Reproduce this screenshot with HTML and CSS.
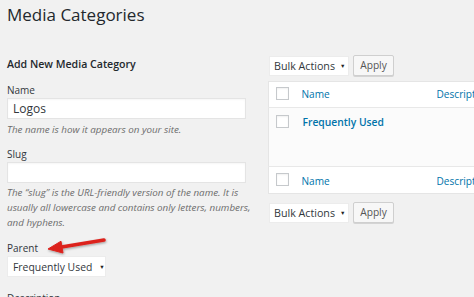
FILE: index.html
```html
<!DOCTYPE html>
<html lang="en">
<head>
  <meta charset="UTF-8">
  <title>Media Categories</title>
  <link rel="stylesheet" href="styles.css">
</head>
<body>
  <div class="wrap">
    <h1 class="page-title">Media Categories</h1>

    <div class="columns">
      <div class="col-left">
        <h2 class="form-title">Add New Media Category</h2>

        <div class="form-field name-field">
          <label class="field-label">Name</label>
          <input class="text-input" type="text" value="Logos">
          <p class="help">The name is how it appears on your site.</p>
        </div>

        <div class="form-field slug-field">
          <label class="field-label">Slug</label>
          <input class="text-input" type="text" value="">
          <p class="help">The “slug” is the URL-friendly version of the name. It is usually all lowercase and contains only letters, numbers, and hyphens.</p>
        </div>

        <div class="form-field parent-field">
          <label class="field-label">Parent</label>
          <div class="select select-parent">Frequently Used <span class="caret">▼</span></div>
          <!-- red callout arrow pointing at the Parent label -->
          <svg class="callout" viewBox="0 0 66 26" xmlns="http://www.w3.org/2000/svg">
            <defs>
              <filter id="shadow" x="-20%" y="-50%" width="140%" height="200%">
                <feDropShadow dx="0.6" dy="1.2" stdDeviation="0.9" flood-color="#000" flood-opacity="0.35"/>
              </filter>
            </defs>
            <g filter="url(#shadow)">
              <path d="M61 7 L17 14.3" stroke="#dc231d" stroke-width="3.6" stroke-linecap="round" fill="none"/>
              <path d="M5 16 L18 8.2 L20 20 Z" fill="#dc231d" stroke="#dc231d" stroke-width="1" stroke-linejoin="round"/>
            </g>
          </svg>
        </div>

        <div class="form-field desc-field">
          <label class="field-label">Description</label>
        </div>
      </div>

      <div class="col-right">
        <div class="tablenav">
          <div class="select select-bulk">Bulk Actions <span class="caret">▼</span></div>
          <button class="button">Apply</button>
        </div>

        <table class="list-table">
          <thead>
            <tr>
              <td class="check-col"><span class="checkbox"></span></td>
              <th class="name-col">Name</th>
              <th class="desc-col">Description</th>
            </tr>
          </thead>
          <tbody>
            <tr class="item-row">
              <td class="check-col"><span class="checkbox"></span></td>
              <td class="name-col"><a class="row-title" href="#">Frequently Used</a></td>
              <td class="desc-col"></td>
            </tr>
          </tbody>
          <tfoot>
            <tr>
              <td class="check-col"><span class="checkbox"></span></td>
              <th class="name-col">Name</th>
              <th class="desc-col">Description</th>
            </tr>
          </tfoot>
        </table>

        <div class="tablenav">
          <div class="select select-bulk">Bulk Actions <span class="caret">▼</span></div>
          <button class="button">Apply</button>
        </div>
      </div>
    </div>
  </div>
</body>
</html>
```

FILE: styles.css
```css
* {
  margin: 0;
  padding: 0;
  box-sizing: border-box;
}

body {
  background-color: #f1f1f1;
  color: #444;
  font-family: "Open Sans", "Noto Sans", sans-serif;
  font-size: 10px;
  width: 474px;
  height: 297px;
  overflow: hidden;
}

.wrap {
  padding-left: 7px;
}

.page-title {
  font-size: 17px;
  font-weight: 400;
  color: #23282d;
  line-height: 30px;
}

.columns {
  display: flex;
  gap: 22px;
}

.col-left {
  width: 239px;
  flex-shrink: 0;
}

.col-right {
  flex: 1;
  min-width: 0;
  overflow: hidden;
  padding-top: 25px;
}

/* left: add form */

.form-title {
  font-size: 10.6px;
  font-weight: 600;
  color: #23282d;
  line-height: 14px;
  margin-top: 27px;
}

.form-field {
  position: relative;
}

.name-field {
  margin-top: 12px;
}

.slug-field {
  margin-top: 10px;
}

.parent-field {
  margin-top: 11px;
}

.desc-field {
  margin-top: 14px;
}

.field-label {
  display: block;
  color: #32373c;
  font-size: 10px;
  line-height: 14px;
  margin-bottom: 1px;
}

.text-input {
  display: block;
  width: 100%;
  height: 21px;
  border: 1px solid #e4e4e4;
  background: #fff;
  font: inherit;
  font-size: 12px;
  color: #32373c;
  padding: 0 5px;
  box-shadow: inset 0 1px 2px rgba(0, 0, 0, 0.04);
  outline: none;
}

.help {
  font-style: italic;
  font-size: 9.8px;
  color: #6c6c6c;
  line-height: 15px;
  margin-top: 3px;
}

.slug-field .help {
  margin-top: 2px;
  width: 244px;
}

.select {
  display: inline-flex;
  align-items: center;
  background: #fff;
  border: 1px solid #ececec;
  color: #32373c;
  white-space: nowrap;
}

.select .caret {
  font-size: 5.5px;
  margin-left: 5px;
  color: #222;
}

.select-parent {
  height: 21px;
  width: 99px;
  padding: 0 4px 0 5px;
  font-size: 10.4px;
}

.select-parent .caret {
  margin-left: 7px;
}

.callout {
  position: absolute;
  left: 36px;
  top: -8px;
  width: 66px;
  height: 26px;
}

/* right: category list */

.tablenav {
  display: flex;
  gap: 4px;
  align-items: flex-start;
  height: 22px;
}

.select-bulk {
  height: 20px;
  width: 80px;
  margin: 1px 0 0 1px;
  padding: 0 5px 0 4px;
  font-size: 10.7px;
}

.button {
  font: inherit;
  font-size: 10.2px;
  color: #555;
  background: #f7f7f7;
  border: 1px solid #cfcfcf;
  border-radius: 2px;
  box-shadow: 0 1px 0 #d4d4d4;
  height: 21px;
  width: 41px;
  line-height: 19px;
  text-align: center;
}

.list-table {
  width: 240px;
  border-collapse: collapse;
  background: #fff;
  border: 1px solid #e5e5e5;
  border-right: 0;
  margin: 4px 0 8px;
  table-layout: fixed;
}

.list-table th,
.list-table td {
  text-align: left;
  font-weight: 400;
  vertical-align: top;
  white-space: nowrap;
  overflow: hidden;
  line-height: 14px;
}

.list-table thead tr {
  height: 26px;
  border-bottom: 1px solid #e8e8e8;
}

.list-table tfoot tr {
  height: 27px;
  border-top: 1px solid #e8e8e8;
}

.check-col {
  width: 33px;
  padding: 5px 0 0 7px;
}

.name-col {
  width: 135px;
  color: #0073aa;
  font-size: 10.1px;
  padding-top: 5px;
}

.desc-col {
  color: #0073aa;
  font-size: 10.1px;
  padding-top: 5px;
}

.list-table tfoot .check-col {
  padding-top: 6px;
}

.list-table tfoot th {
  padding-top: 7px;
}

.item-row {
  height: 59px;
  background: #fbfbfb;
}

.item-row .check-col {
  padding-top: 7px;
}

.item-row .name-col {
  padding: 7px 0 0 1px;
}

.row-title {
  color: #0073aa;
  font-size: 10.3px;
  font-weight: 600;
  text-decoration: none;
}

.checkbox {
  display: block;
  width: 13px;
  height: 13px;
  border: 1px solid #c6c9cc;
  background: #fff;
  box-shadow: inset 0 1px 2px rgba(0, 0, 0, 0.06);
}
```
